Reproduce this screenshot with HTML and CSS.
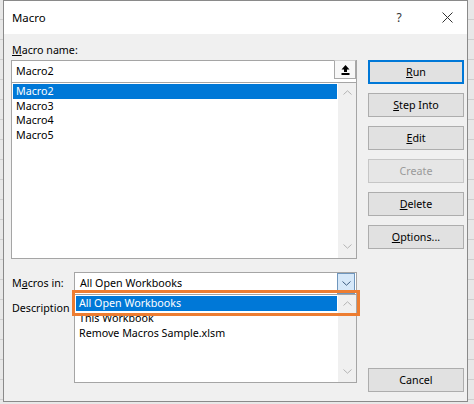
FILE: index.html
```html
<!DOCTYPE html>
<html>
<head>
<meta charset="utf-8">
<link rel="stylesheet" href="styles.css">
</head>
<body>
<div class="dialog">
  <div class="titlebar">
    <span class="title">Macro</span>
    <span class="help">?</span>
    <span class="close">
      <svg width="11" height="11" viewBox="0 0 11 11"><path d="M0.5 0.5 L10.5 10.5 M10.5 0.5 L0.5 10.5" stroke="#333" stroke-width="1" fill="none"/></svg>
    </span>
  </div>
  <div class="body">
    <div class="left">
      <div class="label"><u>M</u>acro name:</div>
      <div class="namebox">
        <span class="nametext">Macro2</span>
        <span class="upbtn">
          <svg width="9" height="10" viewBox="0 0 9 10"><path d="M4.5 0 L8.5 4.5 L6 4.5 L6 7 L3 7 L3 4.5 L0.5 4.5 Z" fill="#000"/><rect x="0.5" y="8" width="8" height="2" fill="#000"/></svg>
        </span>
      </div>
      <div class="listbox">
        <div class="items">
          <div class="item sel">Macro2</div>
          <div class="item">Macro3</div>
          <div class="item">Macro4</div>
          <div class="item">Macro5</div>
        </div>
        <div class="scroll list-scroll">
          <svg width="9" height="5" viewBox="0 0 9 5"><path d="M0.5 4.5 L4.5 0.8 L8.5 4.5" stroke="#b4b4b4" fill="none"/></svg>
          <svg width="9" height="5" viewBox="0 0 9 5"><path d="M0.5 0.5 L4.5 4.2 L8.5 0.5" stroke="#b4b4b4" fill="none"/></svg>
        </div>
      </div>
      <div class="macros">
        <div class="row">
          <span class="label inlabel">M<u>a</u>cros in:</span>
          <div class="combo">
            <span class="combotext">All Open Workbooks</span>
            <span class="combobtn">
              <svg width="9" height="5" viewBox="0 0 9 5"><path d="M0.5 0.5 L4.5 4.2 L8.5 0.5" stroke="#3d5d80" fill="none"/></svg>
            </span>
          </div>
        </div>
        <div class="label desc">Description</div>
        <div class="dropdown">
          <div class="items dd-items">
            <div class="item sel">All Open Workbooks</div>
            <div class="item">This Workbook</div>
            <div class="item">Remove Macros Sample.xlsm</div>
          </div>
          <div class="scroll dd-scroll">
            <svg width="9" height="5" viewBox="0 0 9 5"><path d="M0.5 4.5 L4.5 0.8 L8.5 4.5" stroke="#b4b4b4" fill="none"/></svg>
            <svg width="9" height="5" viewBox="0 0 9 5"><path d="M0.5 0.5 L4.5 4.2 L8.5 0.5" stroke="#b4b4b4" fill="none"/></svg>
          </div>
        </div>
        <div class="highlight"></div>
      </div>
    </div>
    <div class="right">
      <div class="btn default"><u>R</u>un</div>
      <div class="btn"><u>S</u>tep Into</div>
      <div class="btn"><u>E</u>dit</div>
      <div class="btn disabled">Create</div>
      <div class="btn"><u>D</u>elete</div>
      <div class="btn"><u>O</u>ptions...</div>
      <div class="btn cancel">Cancel</div>
    </div>
  </div>
</div>
</body>
</html>
```
FILE: styles.css
```css
* { box-sizing: border-box; }
html, body { margin: 0; padding: 0; }
body {
  width: 474px;
  height: 404px;
  overflow: hidden;
  background: repeating-linear-gradient(to bottom, #e8e8e8 0 19px, #cfcfcf 19px 20px);
  font-family: "Noto Sans", "Open Sans", sans-serif;
  font-size: 10.7px;
  color: #000;
}
u { text-decoration: underline; text-underline-offset: 1px; text-decoration-thickness: 1px; }
.dialog {
  margin-left: 3px;
  width: 465px;
  height: 402px;
  border: 1px solid #8a8a8a;
  background: #f0f0f0;
  display: flex;
  flex-direction: column;
}
.titlebar {
  height: 33px;
  flex: none;
  background: #fff;
  display: flex;
  align-items: center;
  padding: 0 10px 0 8px;
}
.title { font-size: 11.4px; }
.help {
  margin-left: auto;
  width: 20px;
  text-align: center;
  font-size: 12px;
  color: #333;
}
.close {
  margin-left: 28px;
  width: 20px;
  height: 11px;
  display: flex;
  justify-content: center;
}
.body {
  flex: 1;
  display: grid;
  grid-template-columns: 346px 96px;
  column-gap: 11px;
  padding: 8px 2px 9px 7px;
}
.left { display: flex; flex-direction: column; }
.label { height: 16px; line-height: 16px; padding-left: 1px; white-space: nowrap; }
.left > .label { margin-bottom: 2px; }
.namebox {
  height: 23px;
  border: 1px solid #a5a5a5;
  background: #fff;
  display: flex;
  align-items: flex-start;
}
.nametext { flex: 1; line-height: 20px; padding-left: 4px; }
.upbtn {
  width: 22px;
  height: 19px;
  border: 1px solid #a8a8a8;
  border-top-color: #d0d0d0;
  background: #f7f7f7;
  display: flex;
  align-items: center;
  justify-content: center;
  margin-top: -1px;
}
.listbox {
  height: 176px;
  border: 1px solid #a5a5a5;
  border-top: 0;
  background: #fff;
  display: flex;
}
.items { flex: 1; padding: 1px; }
.item { height: 14.5px; line-height: 14.5px; padding-left: 3px; white-space: nowrap; }
.item.sel { background: #0078d7; color: #fff; }
.scroll {
  width: 18px;
  background: #f0f0f0;
  display: flex;
  flex-direction: column;
  justify-content: space-between;
  align-items: center;
}
.list-scroll { padding: 7px 0 9px 0; }
.macros { position: relative; margin-top: 13px; }
.row { display: flex; }
.inlabel { width: 63px; line-height: 23px; height: 23px; }
.combo {
  width: 283px;
  height: 23px;
  border: 1px solid #a5a5a5;
  background: #fff;
  display: flex;
}
.combotext { flex: 1; line-height: 20px; padding-left: 5px; }
.combobtn {
  width: 18px;
  margin-right: 1px;
  background: #d6e8f9;
  border: 1px solid #6f96bd;
  display: flex;
  align-items: center;
  justify-content: center;
}
.desc { margin-top: 5px; }
.dropdown {
  position: absolute;
  left: 63px;
  top: 22px;
  width: 283px;
  height: 89px;
  border: 1px solid #a5a5a5;
  background: #fff;
  display: flex;
}
.dd-items .item { height: 15px; line-height: 15px; }
.dd-scroll { padding: 6px 0 8px 0; }
.highlight {
  position: absolute;
  left: 61px;
  top: 18px;
  width: 288px;
  height: 26px;
  border: 3px solid #ed7d31;
}
.right {
  display: flex;
  flex-direction: column;
  gap: 9px;
  padding-top: 18px;
}
.btn {
  height: 24px;
  border: 1px solid #adadad;
  background: #e1e1e1;
  display: flex;
  align-items: center;
  justify-content: center;
  white-space: nowrap;
}
.btn.default { border: 2px solid #0078d7; }
.btn.disabled { color: #9a9a9a; border-color: #c6c6c6; background: #e6e6e6; }
.btn.cancel { margin-top: auto; }
```
